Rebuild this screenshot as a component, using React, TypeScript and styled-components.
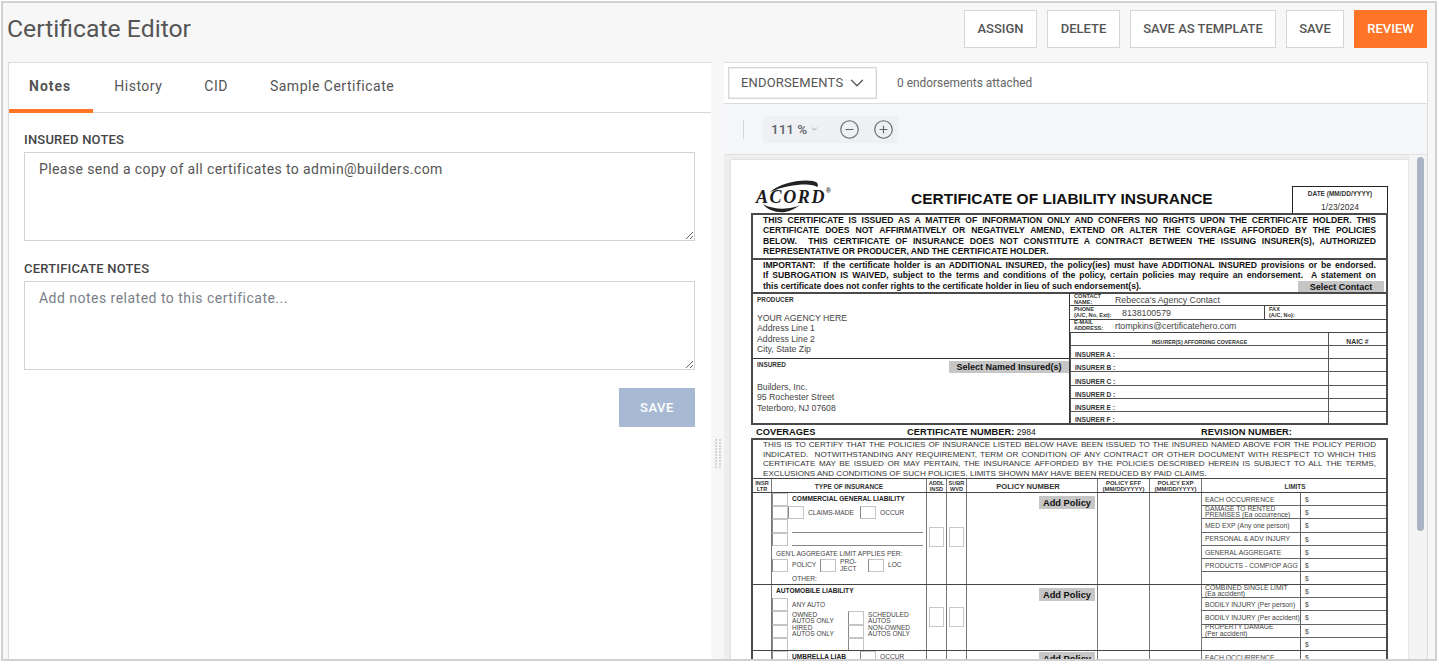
import React from "react";
import styled, { createGlobalStyle } from "styled-components";
import { ChevronDown, CircleMinus, CirclePlus } from "lucide-react";

const GlobalStyle = createGlobalStyle`
  * { box-sizing: border-box; }
  html, body { margin: 0; background: #fff; }
  body { font-family: Roboto, "Liberation Sans", sans-serif; color: #555; }
`;

const Frame = styled.div`
  width: 1436px;
  height: 660px;
  margin: 1px 0 0 1px;
  border: 2px solid #d3d0d3;
  background: #f8f7f8;
  display: flex;
  flex-direction: column;
  overflow: hidden;
`;

const Header = styled.header`
  height: 59px;
  flex: none;
  display: flex;
  align-items: center;
  justify-content: space-between;
  padding: 0 8px 8px 4px;
`;

const Title = styled.h1`
  margin: 0;
  font-size: 24.75px;
  font-weight: 400;
  color: #555;
`;

const Actions = styled.div`
  display: flex;
  gap: 10px;
`;

const ActionButton = styled.button<{ $primary?: boolean; $width: number }>`
  width: ${(p) => p.$width}px;
  height: 38px;
  padding: 0;
  border: 1px solid ${(p) => (p.$primary ? "#ff7426" : "#d6d6d6")};
  background: ${(p) => (p.$primary ? "#ff7426" : "#fff")};
  color: ${(p) => (p.$primary ? "#fff" : "#555")};
  font: 500 13px Roboto, sans-serif;
`;

const Workspace = styled.div`
  flex: 1;
  min-height: 0;
  display: flex;
  padding-left: 5px;
`;

const LeftPanel = styled.section`
  width: 703px;
  flex: none;
  background: #fff;
  border-top: 1px solid #dcdcdc;
  border-left: 1px solid #dcdcdc;
`;

const Tabs = styled.nav`
  height: 50px;
  display: flex;
  border-bottom: 1px solid #d8d8d8;
`;

const Tab = styled.div<{ $active?: boolean }>`
  padding: ${(p) => (p.$active ? "0 22px 1px 20px" : "0 21px 1px")};
  margin-bottom: -1px;
  display: flex;
  align-items: center;
  font-size: 14px;
  letter-spacing: ${(p) => (p.$active ? 1 : 0.5)}px;
  font-weight: ${(p) => (p.$active ? 700 : 400)};
  color: #555;
  border-bottom: 4px solid ${(p) => (p.$active ? "#ff7426" : "transparent")};
`;

const NotesForm = styled.div`
  padding: 20px 16px 0 15px;
  display: flex;
  flex-direction: column;
`;

const FieldLabel = styled.label`
  font-size: 13px;
  font-weight: 500;
  letter-spacing: 0.2px;
  color: #444;
  line-height: 14px;
  margin-bottom: 5px;
`;

const NoteArea = styled.textarea`
  display: block;
  width: 100%;
  height: 89px;
  margin-bottom: 21px;
  padding: 8px 14px;
  border: 1px solid #d2d2d2;
  border-radius: 0;
  outline: none;
  resize: vertical;
  font: 400 14px/17px Roboto, sans-serif;
  letter-spacing: 0.4px;
  color: #555;
  &::placeholder {
    color: #7a8088;
    opacity: 1;
    letter-spacing: 0.48px;
  }
`;

const SaveRow = styled.div`
  display: flex;
  justify-content: flex-end;
  margin-top: -3px;
`;

const SaveButton = styled.button`
  width: 76px;
  height: 39px;
  border: none;
  background: #a8bad3;
  color: #fff;
  font: 500 13px Roboto, sans-serif;
  letter-spacing: 0.6px;
`;

const Splitter = styled.div`
  width: 13px;
  flex: none;
  padding: 376px 0 0 4px;
`;

const Grip = styled.div`
  width: 6px;
  height: 30px;
  background-image:
    linear-gradient(#f8f7f8 0 1px, transparent 1px),
    linear-gradient(90deg, #d4d4d4 0 2px, transparent 2px 4px, #d4d4d4 4px 6px);
  background-size: 100% 3px, 6px 100%;
`;

const RightPanel = styled.section`
  width: 704px;
  flex: none;
  display: flex;
  flex-direction: column;
  min-height: 0;
  border-right: 1px solid #dcdcdc;
`;

const EndorsementBar = styled.div`
  height: 42px;
  flex: none;
  display: flex;
  align-items: center;
  gap: 20px;
  padding: 0 0 1px 4px;
  background: #fff;
  border-top: 1px solid #dcdcdc;
  border-bottom: 1px solid #dcdcdc;
`;

const EndorsementSelect = styled.div`
  width: 149px;
  height: 32px;
  display: flex;
  align-items: center;
  gap: 3px;
  padding-left: 12px;
  border: 1px solid #d6d6d6;
  box-shadow: 0 0 0 1px #efefef inset;
  font-size: 13px;
  font-weight: 400;
  letter-spacing: 0.15px;
  color: #555;
`;

const EndorsementCount = styled.span`
  font-size: 11.9px;
  color: #666;
`;

const ViewerToolbar = styled.div`
  height: 51px;
  flex: none;
  display: flex;
  align-items: center;
  padding-left: 19px;
  gap: 19px;
  background: #f4f6f9;
  border-bottom: 1px solid #dfe1e4;
`;

const ToolbarDivider = styled.div`
  width: 1px;
  height: 19px;
  background: #d6d8db;
`;

const ZoomGroup = styled.div`
  width: 135px;
  height: 27px;
  display: flex;
  align-items: center;
  padding-left: 8px;
  border-radius: 3px;
  background: #eef0f3;
  color: #5f646b;
`;

const ZoomValue = styled.span`
  width: 48px;
  display: flex;
  align-items: center;
  gap: 3px;
  font-size: 13.5px;
  font-weight: 500;
  white-space: nowrap;
`;

const ZoomIcons = styled.span`
  display: flex;
  align-items: center;
  gap: 13px;
  margin-left: 20px;
`;

const ViewerBody = styled.div`
  flex: 1;
  min-height: 0;
  display: flex;
  background: #eeeeee;
`;

const PageScroller = styled.div`
  width: 684px;
  flex: none;
  overflow: hidden;
  padding: 5px 0 0 7px;
`;

const ScrollTrack = styled.div`
  flex: 1;
  background: #f4f4f4;
  border-left: 1px solid #e6e6e6;
  padding: 2px 0 0 8px;
`;

const ScrollThumb = styled.div`
  width: 7px;
  height: 374px;
  border-radius: 4px;
  background: #aab4c3;
`;

/* the certificate itself */
const Page = styled.article`
  width: 677px;
  padding: 20px 20px 0;
  background: #fff;
  box-shadow: 0 0 3px rgba(0, 0, 0, 0.12);
  font-family: "Liberation Sans", Arial, sans-serif;
  color: #444;
`;

const PageHead = styled.div`
  height: 33px;
  display: flex;
  align-items: flex-end;
`;

const Logo = styled.svg`
  width: 80px;
  height: 33px;
  flex: none;
  margin-left: 4px;
`;

const PageTitle = styled.h2`
  margin: 0 0 4px 76px;
  width: 381px;
  font-size: 15.5px;
  line-height: 20px;
  font-weight: 700;
  color: #111;
  white-space: nowrap;
`;

const DateBox = styled.div`
  width: 96px;
  height: 27px;
  border: 1px solid #222;
  border-bottom: none;
  text-align: center;
  font-size: 6.5px;
  line-height: 8px;
  padding-top: 3px;
  font-weight: 700;
  color: #333;
`;

const DateValue = styled.div`
  font-size: 8.5px;
  font-weight: 400;
  line-height: 10px;
  margin-top: 4px;
`;

const NoticeBox = styled.div<{ $height: number }>`
  height: ${(p) => p.$height}px;
  border: 2px solid #4a4a4a;
  border-bottom: none;
  padding: 0 10px;
  overflow: hidden;
  position: relative;
  color: #111;
`;

const NoticeLine = styled.div<{ $last?: boolean }>`
  height: 10.4px;
  font-size: 8.6px;
  line-height: 10.4px;
  font-weight: 700;
  overflow: hidden;
  white-space: pre-wrap;
  text-align: justify;
  text-align-last: ${(p) => (p.$last ? "left" : "justify")};
`;

const Plain = styled.span`
  font-weight: 400;
`;

const FormTag = styled.span`
  display: flex;
  align-items: center;
  justify-content: center;
  background: #c6c6c6;
  font-size: 9px;
  font-weight: 700;
  color: #111;
`;

const SelectContact = styled(FormTag)`
  position: absolute;
  right: 2px;
  bottom: 0;
  width: 86px;
  height: 11px;
`;

const Parties = styled.div`
  display: flex;
  height: 133px;
  border: 2px solid #4a4a4a;
`;

const PartyColumn = styled.div`
  width: 317px;
  flex: none;
  display: flex;
  flex-direction: column;
  border-right: 1px solid #333;
`;

const PartyBlock = styled.div<{ $height: number; $divided?: boolean }>`
  height: ${(p) => p.$height}px;
  padding: 2px 4px;
  border-bottom: ${(p) => (p.$divided ? "1px solid #333" : "none")};
`;

const PartyHead = styled.div<{ $gap: number }>`
  display: flex;
  justify-content: space-between;
  height: 12px;
  margin-bottom: ${(p) => p.$gap}px;
`;

const TinyBold = styled.span<{ $size?: number }>`
  font-size: ${(p) => p.$size ?? 6.4}px;
  line-height: 8px;
  font-weight: 700;
  color: #333;
  white-space: nowrap;
`;

const InsurerTag = styled(TinyBold)`
  line-height: 6px;
`;

const NamedInsured = styled(FormTag)`
  width: 120px;
  height: 12px;
  margin-right: -4px;
`;

const AddressLine = styled.div`
  font-size: 8.7px;
  line-height: 10.4px;
  color: #444;
`;

const ContactColumn = styled.div`
  flex: 1;
  display: flex;
  flex-direction: column;
`;

const ContactRow = styled.div<{ $height: number }>`
  height: ${(p) => p.$height}px;
  flex: none;
  display: flex;
  align-items: center;
  padding-left: 4px;
  border-bottom: 1px solid #444;
`;

const ContactKey = styled.span<{ $width: number }>`
  width: ${(p) => p.$width}px;
  flex: none;
  font-size: 5.6px;
  line-height: 5.6px;
  font-weight: 700;
  color: #333;
`;

const FaxKey = styled(ContactKey)`
  margin-left: 4px;
`;

const ContactValue = styled.span`
  font-size: 8.8px;
  color: #444;
`;

const ContactCell = styled.span<{ $width: number }>`
  width: ${(p) => p.$width}px;
  height: 100%;
  flex: none;
  display: flex;
  align-items: center;
  border-right: 1px solid #444;
`;

const InsurerRow = styled.div<{ $height: number; $last?: boolean }>`
  height: ${(p) => p.$height}px;
  flex: none;
  display: flex;
  overflow: hidden;
  border-bottom: ${(p) => (p.$last ? "none" : "1px solid #555")};
`;

const InsurerName = styled.div<{ $center?: boolean }>`
  width: 259px;
  flex: none;
  display: flex;
  align-items: flex-end;
  justify-content: ${(p) => (p.$center ? "center" : "flex-start")};
  padding-left: ${(p) => (p.$center ? 0 : 4)}px;
  border-right: 1px solid #555;
  border-left: 1px solid #555;
`;

const InsurerCode = styled.div`
  flex: 1;
  display: flex;
  align-items: flex-end;
  justify-content: center;
`;

const CoverageHead = styled.div`
  height: 13px;
  display: flex;
  align-items: center;
  padding-left: 5px;
  font-size: 9.3px;
  font-weight: 700;
  color: #111;
`;

const CoverageCaption = styled.span<{ $width: number }>`
  width: ${(p) => p.$width}px;
  flex: none;
`;

const CertificateNo = styled(Plain)`
  font-size: 8.5px;
`;

const CoverageBox = styled.div`
  border: 2px solid #4a4a4a;
`;

const CoverageIntro = styled.div`
  height: 38px;
  padding: 0 10px;
  color: #333;
`;

const IntroLine = styled.div<{ $last?: boolean }>`
  height: 9.5px;
  font-size: 8.1px;
  line-height: 9.5px;
  overflow: hidden;
  white-space: pre-wrap;
  text-align: justify;
  text-align-last: ${(p) => (p.$last ? "left" : "justify")};
`;

const COLUMNS = [19, 155, 20, 20, 131, 52, 52, 186];

const CoverageRow = styled.div<{ $height: number }>`
  height: ${(p) => p.$height}px;
  display: flex;
  overflow: hidden;
  border-top: 1px solid #444;
`;

const Column = styled.div<{ $width: number; $center?: boolean }>`
  width: ${(p) => p.$width}px;
  flex: none;
  border-right: 1px solid #777;
  display: flex;
  flex-direction: column;
  align-items: ${(p) => (p.$center ? "center" : "stretch")};
  &:last-child {
    border-right: none;
  }
`;

const HeadCell = styled(Column)<{ $size?: number; $low?: boolean; $shift?: number }>`
  justify-content: center;
  align-items: center;
  text-align: center;
  padding-top: ${(p) => (p.$low ? 2 : 0)}px;
  padding-right: ${(p) => p.$shift ?? 0}px;
  font-size: ${(p) => p.$size ?? 5.6}px;
  line-height: 6px;
  font-weight: 700;
  color: #333;
`;

const FlagBox = styled.div<{ $top: number }>`
  width: 15px;
  height: 20px;
  margin-top: ${(p) => p.$top}px;
  border: 1px solid #c8c8c8;
`;

const AddPolicy = styled(FormTag)<{ $top: number }>`
  align-self: flex-end;
  width: 56px;
  height: 13px;
  margin: ${(p) => p.$top}px 2px 0 0;
  font-size: 9.3px;
`;

const TypeRow = styled.div<{ $indent?: boolean }>`
  height: 13.2px;
  flex: none;
  display: flex;
  align-items: center;
  padding-left: ${(p) => (p.$indent ? 4 : 0)}px;
`;

const Tick = styled.span`
  width: 16px;
  height: 13.2px;
  flex: none;
  border: 1px solid #c4c4c4;
  border-left-color: #888;
`;

const TickSpace = styled.span<{ $width: number }>`
  width: ${(p) => p.$width}px;
  height: 13.2px;
  flex: none;
`;

const TypeLabel = styled.span<{ $width?: number; $bold?: boolean }>`
  width: ${(p) => (p.$width ? `${p.$width}px` : "auto")};
  flex: none;
  margin-left: 4px;
  font-size: 6.6px;
  line-height: 6.4px;
  font-weight: ${(p) => (p.$bold ? 700 : 400)};
  color: ${(p) => (p.$bold ? "#222" : "#444")};
  white-space: nowrap;
`;

const HeadingLabel = styled(TypeLabel)`
  margin-left: 0;
`;

const AggregateRow = styled(TypeRow)`
  padding-top: 3px;
`;

const RuledRow = styled(TypeRow)`
  align-items: stretch;
`;

const Rule = styled.span`
  width: 131px;
  margin-left: 4px;
  border-bottom: 1px solid #888;
`;

const LimitRow = styled.div`
  height: 13.2px;
  flex: none;
  display: flex;
  border-bottom: 1px solid #666;
`;

const LimitName = styled.div<{ $single?: boolean }>`
  width: 99px;
  flex: none;
  display: flex;
  align-items: center;
  padding: ${(p) => (p.$single ? 2 : 0)}px 0 0 3px;
  border-right: 1px solid #666;
  font-size: 6.8px;
  line-height: 6.4px;
  color: #444;
  white-space: nowrap;
`;

const LimitAmount = styled.div`
  padding: 1px 0 0 4px;
  display: flex;
  align-items: center;
  font-size: 6.6px;
  color: #444;
`;

const NOTICE = [
  "THIS CERTIFICATE IS ISSUED AS A MATTER OF INFORMATION ONLY AND CONFERS NO RIGHTS UPON THE CERTIFICATE HOLDER. THIS",
  "CERTIFICATE DOES NOT AFFIRMATIVELY OR NEGATIVELY AMEND, EXTEND OR ALTER THE COVERAGE AFFORDED BY THE POLICIES",
  "BELOW.  THIS CERTIFICATE OF INSURANCE DOES NOT CONSTITUTE A CONTRACT BETWEEN THE ISSUING INSURER(S), AUTHORIZED",
  "REPRESENTATIVE OR PRODUCER, AND THE CERTIFICATE HOLDER.",
];

const IMPORTANT = [
  "IMPORTANT:  If the certificate holder is an ADDITIONAL INSURED, the policy(ies) must have ADDITIONAL INSURED provisions or be endorsed.",
  "If SUBROGATION IS WAIVED, subject to the terms and conditions of the policy, certain policies may require an endorsement.  A statement on",
  "this certificate does not confer rights to the certificate holder in lieu of such endorsement(s).",
];

const INTRO = [
  "THIS IS TO CERTIFY THAT THE POLICIES OF INSURANCE LISTED BELOW HAVE BEEN ISSUED TO THE INSURED NAMED ABOVE FOR THE POLICY PERIOD",
  "INDICATED.  NOTWITHSTANDING ANY REQUIREMENT, TERM OR CONDITION OF ANY CONTRACT OR OTHER DOCUMENT WITH RESPECT TO WHICH THIS",
  "CERTIFICATE MAY BE ISSUED OR MAY PERTAIN, THE INSURANCE AFFORDED BY THE POLICIES DESCRIBED HEREIN IS SUBJECT TO ALL THE TERMS,",
  "EXCLUSIONS AND CONDITIONS OF SUCH POLICIES. LIMITS SHOWN MAY HAVE BEEN REDUCED BY PAID CLAIMS.",
];

const GENERAL_LIMITS = [
  ["EACH OCCURRENCE"],
  ["DAMAGE TO RENTED", "PREMISES (Ea occurrence)"],
  ["MED EXP (Any one person)"],
  ["PERSONAL & ADV INJURY"],
  ["GENERAL AGGREGATE"],
  ["PRODUCTS - COMP/OP AGG"],
  [],
];

const AUTO_LIMITS = [
  ["COMBINED SINGLE LIMIT", "(Ea accident)"],
  ["BODILY INJURY (Per person)"],
  ["BODILY INJURY (Per accident)"],
  ["PROPERTY DAMAGE", "(Per accident)"],
  [],
];

const UMBRELLA_LIMITS = [["EACH OCCURRENCE"], ["AGGREGATE"]];

const AcordLogo = () => (
  <Logo viewBox="0 0 80 33">
    <path d="M15 12 C26 3 44 -1 58 1 C63 2 64 5 62 7 C58 3 36 3 15 12 Z" fill="#222" />
    <path d="M8 24 C12 30 22 33 30 32 C36 31 41 28 45 25 C38 29 20 31 8 24 Z" fill="#222" />
    <text
      x="1"
      y="23"
      fontFamily="Liberation Serif, serif"
      fontStyle="italic"
      fontWeight="700"
      fontSize="18"
      letterSpacing="1.6"
      fill="#1a1a1a"
    >
      ACORD
    </text>
    <text x="71" y="13" fontFamily="Liberation Sans, sans-serif" fontWeight="700" fontSize="6.5" fill="#222">
      ®
    </text>
  </Logo>
);

const Limits = ({ rows }: { rows: string[][] }) => (
  <>
    {rows.map((lines, i) => (
      <LimitRow key={i}>
        <LimitName $single={lines.length === 1}>
          <div>
            {lines.map((line) => (
              <div key={line}>{line}</div>
            ))}
          </div>
        </LimitName>
        <LimitAmount>$</LimitAmount>
      </LimitRow>
    ))}
  </>
);

const PolicyColumns = ({ top, limits, flag }: { top: number; limits: string[][]; flag?: number }) => (
  <>
    <Column $width={COLUMNS[2]} $center>
      {flag !== undefined && <FlagBox $top={flag} />}
    </Column>
    <Column $width={COLUMNS[3]} $center>
      {flag !== undefined && <FlagBox $top={flag} />}
    </Column>
    <Column $width={COLUMNS[4]}>
      <AddPolicy $top={top}>Add Policy</AddPolicy>
    </Column>
    <Column $width={COLUMNS[5]} />
    <Column $width={COLUMNS[6]} />
    <Column $width={COLUMNS[7]}>
      <Limits rows={limits} />
    </Column>
  </>
);

const Certificate = () => (
  <Page>
    <PageHead>
      <AcordLogo />
      <PageTitle>CERTIFICATE OF LIABILITY INSURANCE</PageTitle>
      <DateBox>
        DATE (MM/DD/YYYY)
        <DateValue>1/23/2024</DateValue>
      </DateBox>
    </PageHead>

    <NoticeBox $height={45}>
      {NOTICE.map((line, i) => (
        <NoticeLine key={i} $last={i === NOTICE.length - 1}>
          {line}
        </NoticeLine>
      ))}
    </NoticeBox>
    <NoticeBox $height={34}>
      {IMPORTANT.map((line, i) => (
        <NoticeLine key={i} $last={i === IMPORTANT.length - 1}>
          {line}
        </NoticeLine>
      ))}
      <SelectContact>Select Contact</SelectContact>
    </NoticeBox>

    <Parties>
      <PartyColumn>
        <PartyBlock $height={65} $divided>
          <PartyHead $gap={5}>
            <TinyBold>PRODUCER</TinyBold>
          </PartyHead>
          <AddressLine>YOUR AGENCY HERE</AddressLine>
          <AddressLine>Address Line 1</AddressLine>
          <AddressLine>Address Line 2</AddressLine>
          <AddressLine>City, State Zip</AddressLine>
        </PartyBlock>
        <PartyBlock $height={64}>
          <PartyHead $gap={9}>
            <TinyBold>INSURED</TinyBold>
            <NamedInsured>Select Named Insured(s)</NamedInsured>
          </PartyHead>
          <AddressLine>Builders, Inc.</AddressLine>
          <AddressLine>95 Rochester Street</AddressLine>
          <AddressLine>Teterboro, NJ 07608</AddressLine>
        </PartyBlock>
      </PartyColumn>
      <ContactColumn>
        <ContactRow $height={12}>
          <ContactKey $width={41}>
            CONTACT
            <br />
            NAME:
          </ContactKey>
          <ContactValue>Rebecca's Agency Contact</ContactValue>
        </ContactRow>
        <ContactRow $height={14}>
          <ContactCell $width={191}>
            <ContactKey $width={48}>
              PHONE
              <br />
              (A/C, No, Ext):
            </ContactKey>
            <ContactValue>8138100579</ContactValue>
          </ContactCell>
          <FaxKey $width={40}>
            FAX
            <br />
            (A/C, No):
          </FaxKey>
        </ContactRow>
        <ContactRow $height={13}>
          <ContactKey $width={41}>
            E-MAIL
            <br />
            ADDRESS:
          </ContactKey>
          <ContactValue>rtompkins@certificatehero.com</ContactValue>
        </ContactRow>
        <InsurerRow $height={13}>
          <InsurerName $center>
            <InsurerTag $size={5.3}>INSURER(S) AFFORDING COVERAGE</InsurerTag>
          </InsurerName>
          <InsurerCode>
            <InsurerTag $size={6.8}>NAIC #</InsurerTag>
          </InsurerCode>
        </InsurerRow>
        {["A", "B", "C", "D", "E", "F"].map((letter) => (
          <InsurerRow key={letter} $height={letter === "F" ? 11 : 13.2} $last={letter === "F"}>
            <InsurerName>
              <InsurerTag $size={6.6}>INSURER {letter} :</InsurerTag>
            </InsurerName>
            <InsurerCode />
          </InsurerRow>
        ))}
      </ContactColumn>
    </Parties>

    <CoverageHead>
      <CoverageCaption $width={151}>COVERAGES</CoverageCaption>
      <CoverageCaption $width={294}>
        CERTIFICATE NUMBER: <CertificateNo>2984</CertificateNo>
      </CoverageCaption>
      <CoverageCaption $width={120}>REVISION NUMBER:</CoverageCaption>
    </CoverageHead>

    <CoverageBox>
      <CoverageIntro>
        {INTRO.map((line, i) => (
          <IntroLine key={i} $last={i === INTRO.length - 1}>
            {line}
          </IntroLine>
        ))}
      </CoverageIntro>

      <CoverageRow $height={14}>
        <HeadCell $width={COLUMNS[0]}>
          INSR
          <br />
          LTR
        </HeadCell>
        <HeadCell $width={COLUMNS[1]} $size={6.5} $low>
          TYPE OF INSURANCE
        </HeadCell>
        <HeadCell $width={COLUMNS[2]}>
          ADDL
          <br />
          INSD
        </HeadCell>
        <HeadCell $width={COLUMNS[3]}>
          SUBR
          <br />
          WVD
        </HeadCell>
        <HeadCell $width={COLUMNS[4]} $size={7.6} $low $shift={8}>
          POLICY NUMBER
        </HeadCell>
        <HeadCell $width={COLUMNS[5]} $size={6}>
          POLICY EFF
          <br />
          (MM/DD/YYYY)
        </HeadCell>
        <HeadCell $width={COLUMNS[6]} $size={6}>
          POLICY EXP
          <br />
          (MM/DD/YYYY)
        </HeadCell>
        <HeadCell $width={COLUMNS[7]} $size={6.4} $low>
          LIMITS
        </HeadCell>
      </CoverageRow>

      <CoverageRow $height={92}>
        <Column $width={COLUMNS[0]} />
        <Column $width={COLUMNS[1]}>
          <TypeRow>
            <Tick />
            <TypeLabel $bold>COMMERCIAL GENERAL LIABILITY</TypeLabel>
          </TypeRow>
          <TypeRow>
            <Tick />
            <Tick />
            <TypeLabel $width={52}>CLAIMS-MADE</TypeLabel>
            <Tick />
            <TypeLabel>OCCUR</TypeLabel>
          </TypeRow>
          <RuledRow>
            <Tick />
            <Rule />
          </RuledRow>
          <RuledRow>
            <Tick />
            <Rule />
          </RuledRow>
          <AggregateRow $indent>
            <HeadingLabel>GEN'L AGGREGATE LIMIT APPLIES PER:</HeadingLabel>
          </AggregateRow>
          <TypeRow>
            <Tick />
            <TypeLabel $width={28}>POLICY</TypeLabel>
            <Tick />
            <TypeLabel $width={28}>
              PRO-
              <br />
              JECT
            </TypeLabel>
            <Tick />
            <TypeLabel>LOC</TypeLabel>
          </TypeRow>
          <TypeRow>
            <TickSpace $width={16} />
            <TypeLabel>OTHER:</TypeLabel>
          </TypeRow>
        </Column>
        <PolicyColumns top={3} limits={GENERAL_LIMITS} flag={34} />
      </CoverageRow>

      <CoverageRow $height={66}>
        <Column $width={COLUMNS[0]} />
        <Column $width={COLUMNS[1]}>
          <TypeRow $indent>
            <HeadingLabel $bold>AUTOMOBILE LIABILITY</HeadingLabel>
          </TypeRow>
          <TypeRow>
            <Tick />
            <TypeLabel>ANY AUTO</TypeLabel>
          </TypeRow>
          <TypeRow>
            <Tick />
            <TypeLabel $width={56}>
              OWNED
              <br />
              AUTOS ONLY
            </TypeLabel>
            <Tick />
            <TypeLabel>
              SCHEDULED
              <br />
              AUTOS
            </TypeLabel>
          </TypeRow>
          <TypeRow>
            <Tick />
            <TypeLabel $width={56}>
              HIRED
              <br />
              AUTOS ONLY
            </TypeLabel>
            <Tick />
            <TypeLabel>
              NON-OWNED
              <br />
              AUTOS ONLY
            </TypeLabel>
          </TypeRow>
          <TypeRow>
            <Tick />
            <TickSpace $width={60} />
            <Tick />
          </TypeRow>
        </Column>
        <PolicyColumns top={3} limits={AUTO_LIMITS} flag={22} />
      </CoverageRow>

      <CoverageRow $height={40}>
        <Column $width={COLUMNS[0]} />
        <Column $width={COLUMNS[1]}>
          <TypeRow>
            <Tick />
            <TypeLabel $width={68} $bold>
              UMBRELLA LIAB
            </TypeLabel>
            <Tick />
            <TypeLabel>OCCUR</TypeLabel>
          </TypeRow>
        </Column>
        <PolicyColumns top={1} limits={UMBRELLA_LIMITS} />
      </CoverageRow>
    </CoverageBox>
  </Page>
);

export default function App() {
  return (
    <>
      <GlobalStyle />
      <Frame>
        <Header>
          <Title>Certificate Editor</Title>
          <Actions>
            <ActionButton $width={73}>ASSIGN</ActionButton>
            <ActionButton $width={73}>DELETE</ActionButton>
            <ActionButton $width={146}>SAVE AS TEMPLATE</ActionButton>
            <ActionButton $width={58}>SAVE</ActionButton>
            <ActionButton $width={73} $primary>
              REVIEW
            </ActionButton>
          </Actions>
        </Header>
        <Workspace>
          <LeftPanel>
            <Tabs>
              <Tab $active>Notes</Tab>
              <Tab>History</Tab>
              <Tab>CID</Tab>
              <Tab>Sample Certificate</Tab>
            </Tabs>
            <NotesForm>
              <FieldLabel>INSURED NOTES</FieldLabel>
              <NoteArea readOnly defaultValue="Please send a copy of all certificates to admin@builders.com" />
              <FieldLabel>CERTIFICATE NOTES</FieldLabel>
              <NoteArea readOnly placeholder="Add notes related to this certificate..." />
              <SaveRow>
                <SaveButton>SAVE</SaveButton>
              </SaveRow>
            </NotesForm>
          </LeftPanel>
          <Splitter>
            <Grip />
          </Splitter>
          <RightPanel>
            <EndorsementBar>
              <EndorsementSelect>
                ENDORSEMENTS
                <ChevronDown size={22} strokeWidth={1.4} />
              </EndorsementSelect>
              <EndorsementCount>0 endorsements attached</EndorsementCount>
            </EndorsementBar>
            <ViewerToolbar>
              <ToolbarDivider />
              <ZoomGroup>
                <ZoomValue>
                  111 %
                  <ChevronDown size={12} strokeWidth={1.5} />
                </ZoomValue>
                <ZoomIcons>
                  <CircleMinus size={21} strokeWidth={1.25} />
                  <CirclePlus size={21} strokeWidth={1.25} />
                </ZoomIcons>
              </ZoomGroup>
            </ViewerToolbar>
            <ViewerBody>
              <PageScroller>
                <Certificate />
              </PageScroller>
              <ScrollTrack>
                <ScrollThumb />
              </ScrollTrack>
            </ViewerBody>
          </RightPanel>
        </Workspace>
      </Frame>
    </>
  );
}
